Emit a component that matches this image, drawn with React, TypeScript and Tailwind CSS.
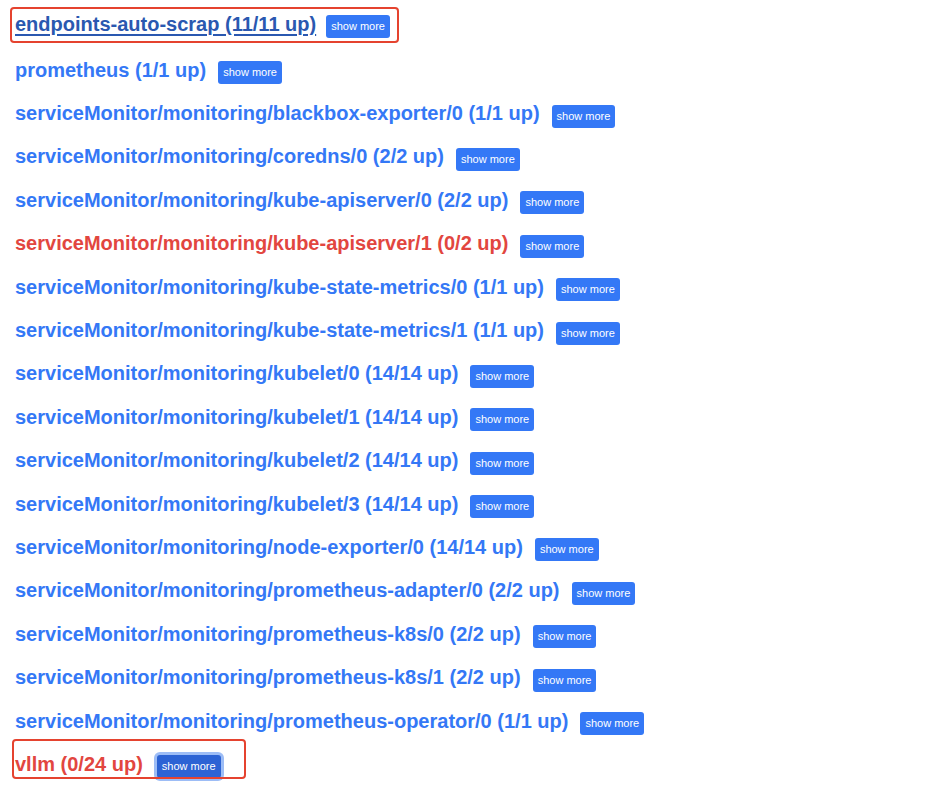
import React from "react";

type Row = { label: string; red?: boolean };

const rows: Row[] = [
  { label: "endpoints-auto-scrap (11/11 up)" },
  { label: "prometheus (1/1 up)" },
  { label: "serviceMonitor/monitoring/blackbox-exporter/0 (1/1 up)" },
  { label: "serviceMonitor/monitoring/coredns/0 (2/2 up)" },
  { label: "serviceMonitor/monitoring/kube-apiserver/0 (2/2 up)" },
  { label: "serviceMonitor/monitoring/kube-apiserver/1 (0/2 up)", red: true },
  { label: "serviceMonitor/monitoring/kube-state-metrics/0 (1/1 up)" },
  { label: "serviceMonitor/monitoring/kube-state-metrics/1 (1/1 up)" },
  { label: "serviceMonitor/monitoring/kubelet/0 (14/14 up)" },
  { label: "serviceMonitor/monitoring/kubelet/1 (14/14 up)" },
  { label: "serviceMonitor/monitoring/kubelet/2 (14/14 up)" },
  { label: "serviceMonitor/monitoring/kubelet/3 (14/14 up)" },
  { label: "serviceMonitor/monitoring/node-exporter/0 (14/14 up)" },
  { label: "serviceMonitor/monitoring/prometheus-adapter/0 (2/2 up)" },
  { label: "serviceMonitor/monitoring/prometheus-k8s/0 (2/2 up)" },
  { label: "serviceMonitor/monitoring/prometheus-k8s/1 (2/2 up)" },
  { label: "serviceMonitor/monitoring/prometheus-operator/0 (1/1 up)" },
  { label: "vllm (0/24 up)", red: true },
];

export default function App() {
  return (
    <div
      className="w-[925px] h-[787px] bg-white overflow-hidden pt-[2px]"
      style={{ fontFamily: '"Liberation Sans", Arial, sans-serif' }}
    >
      <div className="flex flex-col">
        {rows.map((r, i) => {
          const first = i === 0;
          const last = i === rows.length - 1;
          return (
            <div
              key={i}
              className={`flex items-center h-[43.4px] pl-[15px] ${first ? "mb-[2.6px]" : ""}`}
            >
              <div className="relative flex items-center">
                {(first || last) && (
                  <div
                    className={`absolute border-2 border-[#e5432f] rounded-[4px] pointer-events-none ${
                      first
                        ? "left-[-5px] top-[-2.2px] w-[389px] h-[36px]"
                        : "left-[-3px] top-[-10.6px] w-[234px] h-[40px]"
                    }`}
                  />
                )}
                <span
                  className={`text-[20px] font-bold leading-[24px] whitespace-pre ${
                    r.red
                      ? "text-[#e2463f]"
                      : first
                      ? "text-[#2a58b0] underline underline-offset-[3px]"
                      : "text-[#3478f6]"
                  }`}
                >
                  {r.label}
                </span>
                <button
                  className={`mt-[6px] h-[23px] px-[5px] rounded-[3px] text-[11px] leading-[15px] text-white ${
                    last
                      ? "bg-[#2c63d4] ring-[3px] ring-[#9dbdf6] ml-[14px]"
                      : first
                      ? "bg-[#3478f6] ml-[10px]"
                      : "bg-[#3478f6] ml-[12px]"
                  }`}
                >
                  show more
                </button>
              </div>
            </div>
          );
        })}
      </div>
    </div>
  );
}
